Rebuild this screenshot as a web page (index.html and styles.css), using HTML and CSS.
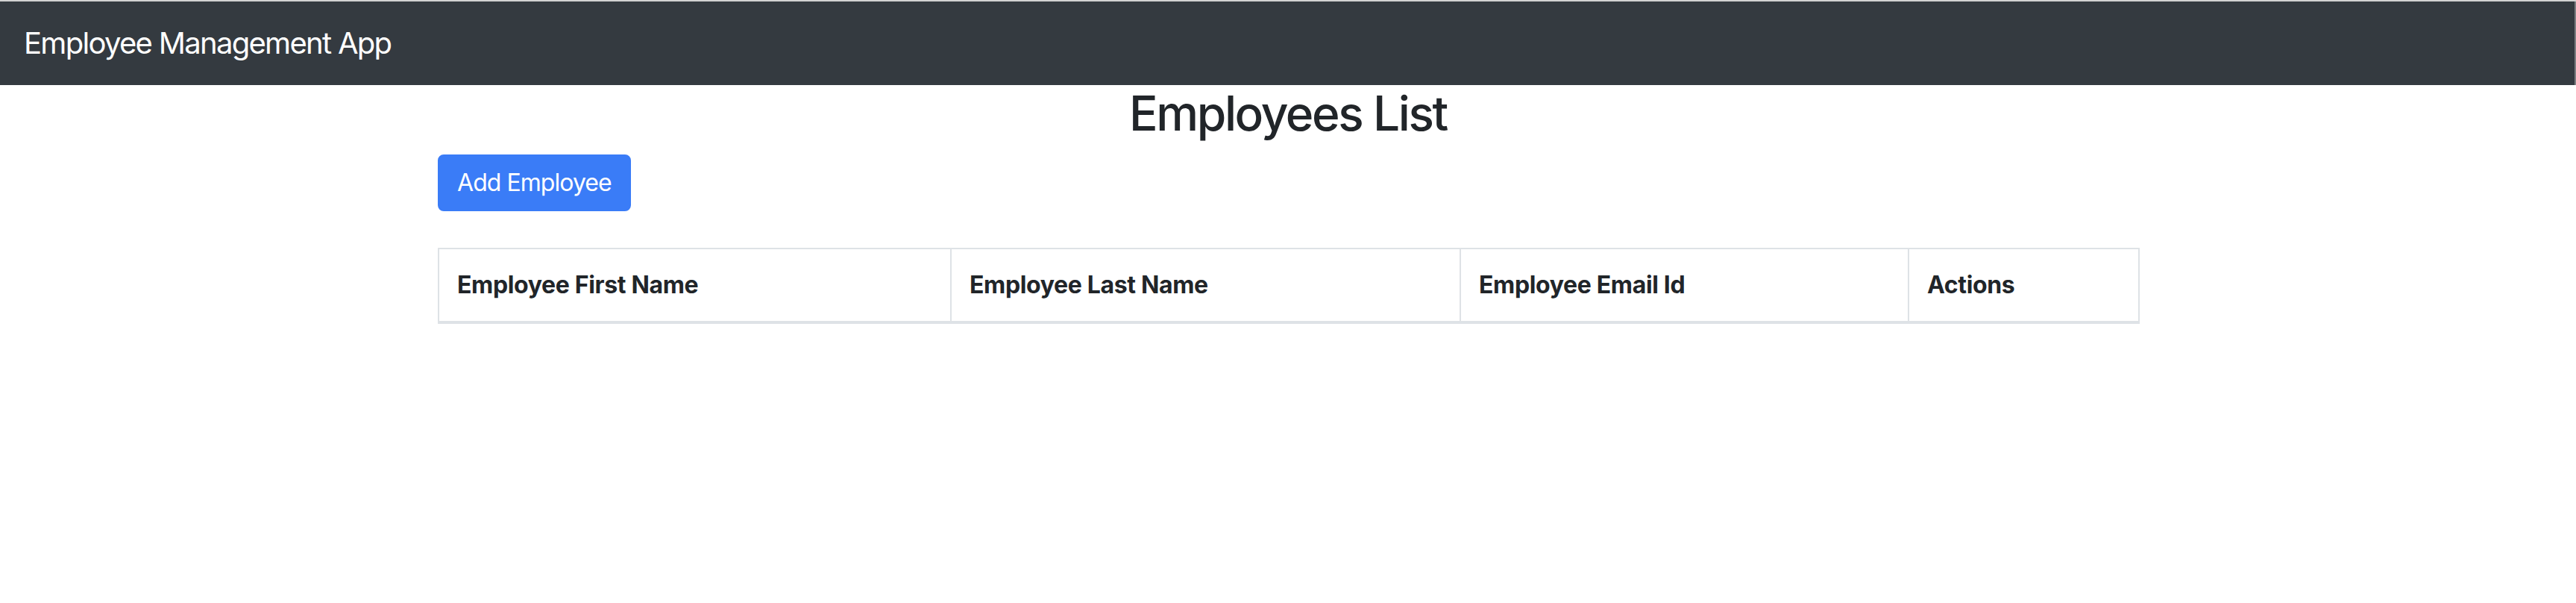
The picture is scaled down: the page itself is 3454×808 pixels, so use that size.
FILE: index.html
```html
<!DOCTYPE html>
<html lang="en">
<head>
<meta charset="utf-8">
<title>Employee Management App</title>
<link rel="stylesheet" href="styles.css">
</head>
<body>
<div class="chrome-top"></div>
<header class="navbar">
  <a class="navbar-brand" href="#">Employee Management App</a>
</header>
<main class="container">
  <h2 class="page-title">Employees List</h2>
  <div class="toolbar">
    <button class="btn-primary" type="button">Add Employee</button>
  </div>
  <table class="emp-table">
    <colgroup>
      <col class="col-first">
      <col class="col-last">
      <col class="col-email">
      <col class="col-actions">
    </colgroup>
    <thead>
      <tr>
        <th>Employee First Name</th>
        <th>Employee Last Name</th>
        <th>Employee Email Id</th>
        <th>Actions</th>
      </tr>
    </thead>
    <tbody></tbody>
  </table>
</main>
</body>
</html>
```

FILE: styles.css
```css
html, body {
  margin: 0;
  padding: 0;
  background: #ffffff;
}

body {
  font-family: Inter, "Noto Sans", "Liberation Sans", sans-serif;
  color: #212529;
  font-size: 32px;
  line-height: 1.5;
}

.chrome-top {
  height: 2px;
  background: #d2d2d2;
}

.navbar {
  box-sizing: border-box;
  height: 112px;
  background: #343a40;
  padding: 0 32px;
  display: flex;
  align-items: center;
  border-right: 2px solid #7a7d80;
}

.navbar-brand {
  color: #ffffff;
  text-decoration: none;
  font-size: 40px;
  line-height: 60px;
  font-weight: 400;
  letter-spacing: -1.7px;
}

.container {
  width: 2280px;
  margin: 0 auto;
}

.page-title {
  margin: 0 0 16px;
  text-align: center;
  font-size: 64px;
  line-height: 76.8px;
  font-weight: 500;
  letter-spacing: -2.4px;
}

.toolbar {
  display: flex;
  margin-bottom: 49px;
}

.btn-primary {
  font-family: inherit;
  font-size: 32px;
  line-height: 48px;
  padding: 12px 24px;
  border: 2px solid #3a7cf7;
  border-radius: 8px;
  background: #3a7cf7;
  color: #ffffff;
  letter-spacing: -0.95px;
}

.emp-table {
  width: 2280px;
  border-collapse: collapse;
  table-layout: fixed;
  border: 2px solid #dee2e6;
}

.col-first { width: 687px; }
.col-last { width: 683px; }
.col-email { width: 601px; }
.col-actions { width: 309px; }

.emp-table th {
  text-align: left;
  font-weight: 700;
  font-size: 32px;
  line-height: 48px;
  padding: 24px;
  border: 2px solid #dee2e6;
  border-bottom-width: 4px;
  letter-spacing: -0.35px;
  vertical-align: bottom;
}
```
